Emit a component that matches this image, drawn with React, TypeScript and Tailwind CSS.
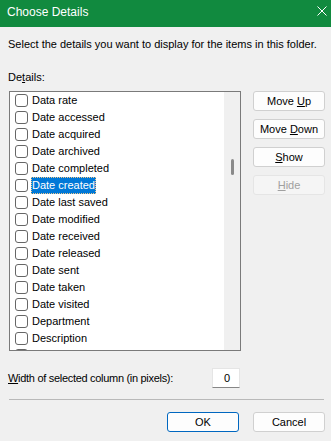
import React from "react"

const items = [
  "Data rate",
  "Date accessed",
  "Date acquired",
  "Date archived",
  "Date completed",
  "Date created",
  "Date last saved",
  "Date modified",
  "Date received",
  "Date released",
  "Date sent",
  "Date taken",
  "Date visited",
  "Department",
  "Description",
  "",
]

function Btn({ children, disabled, primary }: { children: React.ReactNode; disabled?: boolean; primary?: boolean }) {
  return (
    <div
      className={`w-[72px] h-[20px] rounded-[3px] border flex items-center justify-center leading-none ${
        disabled
          ? "bg-[#f5f5f5] border-[#e5e5e5] text-[#a0a0a0]"
          : primary
          ? "bg-[#fdfdfd] border-[#0067c0] text-black"
          : "bg-[#fdfdfd] border-[#d0d0d0] text-black"
      }`}
    >
      <span>{children}</span>
    </div>
  )
}

export default function App() {
  return (
    <div className="w-[331px] h-[441px] bg-[#f0f0f0] text-[11px] leading-[16px] text-black font-['Liberation_Sans',Arial,sans-serif] overflow-hidden">
      {/* title bar */}
      <div className="h-[27px] bg-[#118a3f] flex justify-between items-start pl-[7px] pr-[4px] pt-[4px] text-white text-[12px]">
        <span>Choose Details</span>
        <svg width="10" height="10" viewBox="0 0 10 10" className="mt-[2px]">
          <path d="M0.5 0.5 L9.5 9.5 M9.5 0.5 L0.5 9.5" stroke="white" strokeWidth="1" />
        </svg>
      </div>

      <div className="pl-[8px] whitespace-nowrap">
        <div className="mt-[9px]">Select the details you want to display for the items in this folder.</div>
        <div className="mt-[17px]">
          De<span className="underline">t</span>ails:
        </div>
      </div>

      <div className="flex mt-[6px] ml-[9px]">
        {/* list box */}
        <div className="w-[232px] h-[260px] border border-[#7a7a7a] bg-white flex overflow-hidden">
          <div className="flex-1 overflow-hidden">
            {items.map((it, i) => {
              const sel = it === "Date created"
              return (
                <div key={i} className="h-[17px] flex items-center pl-[5px] leading-[17px]">
                  <div className="w-[13px] h-[13px] rounded-[3px] border border-[#666666] bg-white shrink-0" />
                  <span
                    className={`ml-[3px] h-[17px] px-[1px] ${
                      sel ? "bg-[#0078d7] text-white outline outline-1 outline-dotted outline-[#f3c98b] -outline-offset-1" : ""
                    }`}
                  >
                    {it}
                  </span>
                </div>
              )
            })}
          </div>
          <div className="w-[16px] bg-[#f0f0f0] relative">
            <div className="absolute left-[7px] top-[67px] w-[3px] h-[16px] rounded-full bg-[#8a8a8a]" />
          </div>
        </div>

        {/* buttons */}
        <div className="ml-[12px] flex flex-col gap-[8px]">
          <Btn>
            Move <span className="underline">U</span>p
          </Btn>
          <Btn>
            Move <span className="underline">D</span>own
          </Btn>
          <Btn>
            <span className="underline">S</span>how
          </Btn>
          <Btn disabled>
            <span className="underline">H</span>ide
          </Btn>
        </div>
      </div>

      <div className="flex items-center mt-[17px] pl-[8px] whitespace-nowrap">
        <span className="w-[204px] tracking-[-0.3px]">
          <span className="underline">W</span>idth of selected column (in pixels):
        </span>
        <div className="w-[28px] h-[20px] bg-white border border-[#e5e5e5] border-b-[#868686] flex items-center justify-end pr-[9px]">
          0
        </div>
      </div>

      <div className="mt-[11px] ml-[9px] w-[315px] h-px bg-[#b9b9b9]" />

      <div className="flex justify-end gap-[14px] mt-[12px] pr-[6px]">
        <Btn primary>OK</Btn>
        <Btn>Cancel</Btn>
      </div>
    </div>
  )
}
